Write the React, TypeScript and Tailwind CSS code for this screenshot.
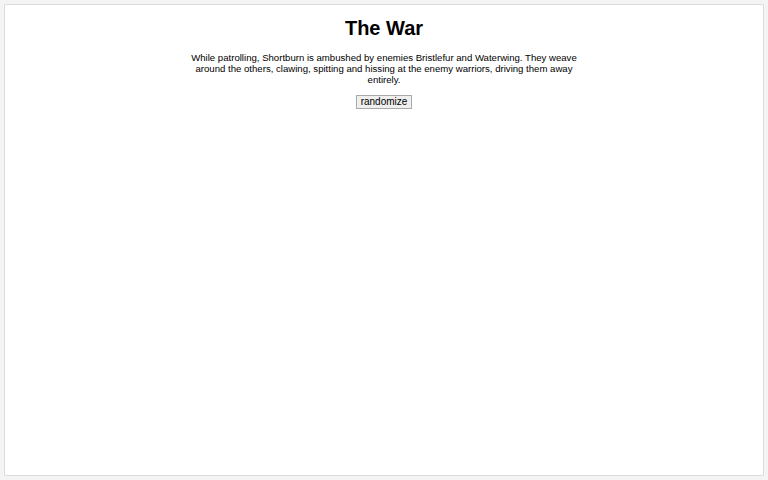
export default function App() {
  return (
    <div className="h-[480px] w-[768px] bg-[#f4f4f4] p-[4px] font-['Liberation_Sans',Arial,sans-serif] text-black">
      <div className="flex h-full flex-col items-center border border-[#dcdcdc] bg-white pt-[10px]">
        <h1 className="text-[20px] font-bold leading-[26px]">The War</h1>
        <p className="mt-[12px] w-[392px] text-center text-[9.6px] leading-[10.8px]">
          While patrolling, Shortburn is ambushed by enemies Bristlefur and Waterwing. They weave
          around the others, clawing, spitting and hissing at the enemy warriors, driving them away
          entirely.
        </p>
        <button className="mt-[10px] border border-[#a9a9a9] bg-[#efefef] px-[4px] py-0 text-[10px] leading-[12px]">
          randomize
        </button>
      </div>
    </div>
  );
}
